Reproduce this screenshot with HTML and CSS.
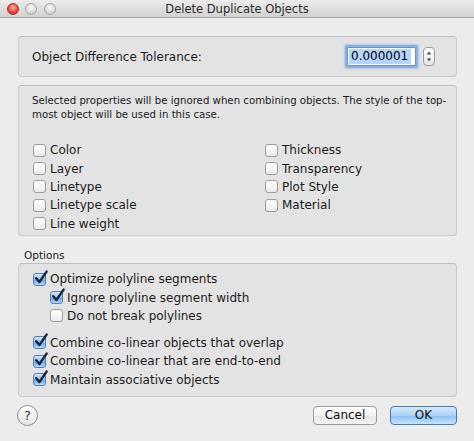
FILE: index.html
```html
<!DOCTYPE html>
<html>
<head>
<meta charset="utf-8">
<link rel="stylesheet" href="styles.css">
</head>
<body>
<div class="titlebar">
  <div class="lights"><span class="light red"></span><span class="light"></span><span class="light"></span></div>
  <div class="title">Delete Duplicate Objects</div>
  <div></div>
</div>
<div class="content">
  <div class="box tol">
    <span>Object Difference Tolerance:</span>
    <div class="tol-ctrl">
      <div class="field"><span class="sel">0.000001</span></div>
      <div class="stepper">
        <svg width="10" height="17" viewBox="0 0 10 17"><path d="M5 3.5 L7 6.5 H3 Z" fill="#444"/><path d="M5 13.5 L7 10.5 H3 Z" fill="#444"/></svg>
      </div>
    </div>
  </div>

  <div class="box props">
    <p class="desc">Selected properties will be ignored when combining objects. The style of the top-<br>most object will be used in this case.</p>
    <div class="cols">
      <div>
        <div class="row"><span class="cb"></span>Color</div>
        <div class="row"><span class="cb"></span>Layer</div>
        <div class="row"><span class="cb"></span>Linetype</div>
        <div class="row"><span class="cb"></span>Linetype scale</div>
        <div class="row"><span class="cb"></span>Line weight</div>
      </div>
      <div>
        <div class="row"><span class="cb"></span>Thickness</div>
        <div class="row"><span class="cb"></span>Transparency</div>
        <div class="row"><span class="cb"></span>Plot Style</div>
        <div class="row"><span class="cb"></span>Material</div>
      </div>
    </div>
  </div>

  <div class="group-label">Options</div>
  <div class="box options">
    <div class="row"><span class="cb on"><svg class="tick" viewBox="0 0 16 16"><path d="M3.2 8.2 L6.4 12 L13.6 1.6"/></svg></span>Optimize polyline segments</div>
    <div class="row sub"><span class="cb on"><svg class="tick" viewBox="0 0 16 16"><path d="M3.2 8.2 L6.4 12 L13.6 1.6"/></svg></span>Ignore polyline segment width</div>
    <div class="row sub"><span class="cb"></span>Do not break polylines</div>
    <div class="row spaced"><span class="cb on"><svg class="tick" viewBox="0 0 16 16"><path d="M3.2 8.2 L6.4 12 L13.6 1.6"/></svg></span>Combine co-linear objects that overlap</div>
    <div class="row"><span class="cb on"><svg class="tick" viewBox="0 0 16 16"><path d="M3.2 8.2 L6.4 12 L13.6 1.6"/></svg></span>Combine co-linear that are end-to-end</div>
    <div class="row"><span class="cb on"><svg class="tick" viewBox="0 0 16 16"><path d="M3.2 8.2 L6.4 12 L13.6 1.6"/></svg></span>Maintain associative objects</div>
  </div>

  <div class="footer">
    <div class="help">?</div>
    <div class="buttons">
      <div class="btn">Cancel</div>
      <div class="btn ok">OK</div>
    </div>
  </div>
</div>
</body>
</html>
```
FILE: styles.css
```css
* { box-sizing: border-box; }
html, body { margin: 0; }
body {
  width: 474px;
  height: 441px;
  background: #ececec;
  font-family: "DejaVu Sans", sans-serif;
  color: #1c1c1c;
  overflow: hidden;
}
.titlebar {
  height: 18px;
  background: linear-gradient(#ececec, #d2d2d2);
  border-bottom: 1px solid #a3a3a3;
  display: grid;
  grid-template-columns: 1fr auto 1fr;
  align-items: center;
}
.lights { display: flex; gap: 6.5px; padding-left: 6.5px; }
.light {
  width: 12px;
  height: 12px;
  border-radius: 50%;
  background: radial-gradient(circle at 50% 35%, #fbfbfb, #dcdcdc 55%, #bdbdbd);
  border: 1px solid #a8a8a8;
}
.light.red {
  background: radial-gradient(circle at 50% 35%, #ffb0a3, #ea4a3e 55%, #b7261d);
  border-color: #a2352c;
}
.title { font-size: 11.5px; color: #2b2b2b; text-align: center; }
.content { padding: 18px 17px 0 18px; }
.box {
  background: #e3e3e3;
  border: 1px solid #cacaca;
  border-top-color: #c0c0c0;
  border-radius: 4px;
}
.tol {
  height: 41px;
  display: flex;
  align-items: center;
  justify-content: space-between;
  padding: 0 21px 0 13px;
  font-size: 12px;
}
.tol-ctrl { display: flex; align-items: center; gap: 7px; }
.field {
  width: 69px;
  height: 19px;
  background: #fff;
  border: 1px solid #6f92c2;
  box-shadow: 0 0 0 2px #86b2e8, 0 0 2px 3px rgba(120, 165, 225, 0.45);
  border-radius: 1px;
  display: flex;
  align-items: center;
  padding-left: 1px;
}
.sel { background: #b5d5fe; padding: 0 3px 0 2px; font-size: 12px; line-height: 15px; color: #000; }
.stepper {
  width: 12px;
  height: 19px;
  border: 1px solid #9b9b9b;
  border-radius: 4px;
  background: linear-gradient(#ffffff, #e6e6e6);
  display: flex;
  align-items: center;
  justify-content: center;
}
.stepper svg { display: block; }
.props { margin-top: 8px; height: 151px; padding: 8px 0 0 13px; }
.desc { margin: 0; font-size: 10.2px; line-height: 14px; }
.cols { display: grid; grid-template-columns: 232px 1fr; margin: 19px 0 0 1px; }
.row {
  height: 18.4px;
  display: flex;
  align-items: center;
  gap: 4px;
  font-size: 12px;
}
.cb {
  position: relative;
  width: 13px;
  height: 13px;
  flex: none;
  border: 1px solid #9c9c9c;
  border-radius: 3px;
  background: linear-gradient(#ffffff, #ebebeb);
}
.cb.on {
  border-color: #5a7fae;
  background: linear-gradient(#d3e7fb, #8dbcee 50%, #6aa7ea 55%, #b6d8f8);
}
.tick {
  position: absolute;
  left: -1px;
  top: -4px;
  width: 16px;
  height: 16px;
  overflow: visible;
}
.tick path {
  fill: none;
  stroke: #15253e;
  stroke-width: 2.4;
  stroke-linecap: round;
  stroke-linejoin: round;
}
.group-label { font-size: 10.5px; line-height: 13px; margin: 13px 0 1px 6px; color: #222; }
.options { padding: 6px 0 7px 14px; }
.options .sub { padding-left: 17px; }
.options .spaced { margin-top: 8.5px; }
.footer { display: flex; align-items: center; margin-top: 8px; margin-left: -1px; }
.help {
  width: 21px;
  height: 21px;
  border-radius: 50%;
  border: 1px solid #8c8c8c;
  background: linear-gradient(#ffffff, #e4e4e4);
  font-size: 13px;
  line-height: 19px;
  text-align: center;
  color: #333;
}
.buttons { margin-left: auto; display: flex; gap: 13px; }
.btn {
  width: 64px;
  height: 19px;
  border: 1px solid #9a9a9a;
  border-radius: 4px;
  background: linear-gradient(#ffffff, #f1f1f1 50%, #e6e6e6 52%, #f4f4f4);
  font-size: 12px;
  line-height: 17px;
  text-align: center;
  color: #111;
}
.btn.ok {
  width: 67px;
  border-color: #4f78ad;
  background: linear-gradient(#d6eafc, #a9d1f6 50%, #89c0f2 52%, #c6e4fd);
}
```
